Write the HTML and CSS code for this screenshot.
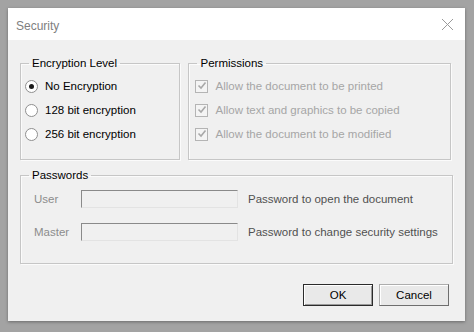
FILE: index.html
```html
<!DOCTYPE html>
<html>
<head>
<meta charset="utf-8">
<link rel="stylesheet" href="styles.css">
</head>
<body>
<div class="window">
  <div class="titlebar">
    <span class="title">Security</span>
    <svg class="close" width="13" height="13" viewBox="0 0 13 13"><path d="M1 1 L12 12 M12 1 L1 12" stroke="#9a9a9a" stroke-width="1" fill="none"/></svg>
  </div>
  <div class="content">
    <div class="top-row">
      <fieldset class="group enc">
        <legend>Encryption Level</legend>
        <div class="opt-list">
          <label class="opt"><span class="radio checked"></span>No Encryption</label>
          <label class="opt"><span class="radio"></span>128 bit encryption</label>
          <label class="opt"><span class="radio"></span>256 bit encryption</label>
        </div>
      </fieldset>
      <fieldset class="group perm">
        <legend>Permissions</legend>
        <div class="opt-list perm-list">
          <label class="opt disabled"><span class="check"><svg width="10" height="10" viewBox="0 0 10 10"><path d="M1.5 4.5 L4 7 L8.5 1.5" stroke="#a8a8a8" stroke-width="1.6" fill="none"/></svg></span>Allow the document to be printed</label>
          <label class="opt disabled"><span class="check"><svg width="10" height="10" viewBox="0 0 10 10"><path d="M1.5 4.5 L4 7 L8.5 1.5" stroke="#a8a8a8" stroke-width="1.6" fill="none"/></svg></span>Allow text and graphics to be copied</label>
          <label class="opt disabled"><span class="check"><svg width="10" height="10" viewBox="0 0 10 10"><path d="M1.5 4.5 L4 7 L8.5 1.5" stroke="#a8a8a8" stroke-width="1.6" fill="none"/></svg></span>Allow the document to be modified</label>
        </div>
      </fieldset>
    </div>
    <fieldset class="group pw">
      <legend>Passwords</legend>
      <div class="pw-grid">
        <span class="pw-label">User</span>
        <span class="pw-input"></span>
        <span class="pw-desc">Password to open the document</span>
        <span class="pw-label">Master</span>
        <span class="pw-input"></span>
        <span class="pw-desc">Password to change security settings</span>
      </div>
    </fieldset>
    <div class="buttons">
      <button class="btn default">OK</button>
      <button class="btn">Cancel</button>
    </div>
  </div>
</div>
</body>
</html>
```

FILE: styles.css
```css
html, body {
  margin: 0;
  padding: 0;
}
body {
  background: #a3a3a3;
  width: 474px;
  height: 332px;
  overflow: hidden;
  font-family: "Liberation Sans", Arial, sans-serif;
  font-size: 11.5px;
  color: #000;
}
.window {
  margin: 8px 0 0 8px;
  width: 457px;
  height: 313px;
  background: #f0f0f0;
  box-shadow: 0 1px 3px rgba(0,0,0,0.35);
  display: flex;
  flex-direction: column;
}
.titlebar {
  height: 32px;
  box-sizing: border-box;
  background: #fff;
  display: flex;
  align-items: center;
  justify-content: space-between;
  padding: 3px 11px 0 8px;
}
.title {
  color: #808080;
  font-size: 12px;
}
.close {
  display: block;
  margin-top: -2px;
}
.content {
  padding: 16px 14px 0 12px;
  display: flex;
  flex-direction: column;
}
.top-row {
  display: flex;
  gap: 8px;
  height: 104px;
}
.group {
  margin: 0;
  padding: 0;
  min-width: 0;
  border: 1px solid #c6c6c6;
  box-shadow: inset 1px 1px 0 #fbfbfb, 1px 1px 0 #fbfbfb;
}
.group legend {
  margin-left: 8px;
  padding: 0 3px;
  line-height: 14px;
  height: 14px;
  font-size: 11.5px;
}
.enc {
  width: 160px;
}
.perm {
  width: 263px;
}
.opt-list {
  display: flex;
  flex-direction: column;
  padding: 4px 0 0 4px;
}
.perm-list {
  padding-left: 6px;
}
.opt {
  height: 24px;
  display: flex;
  align-items: center;
  gap: 7px;
  white-space: nowrap;
}
.opt.disabled {
  color: #a6a6a6;
}
.radio {
  width: 11px;
  height: 11px;
  border-radius: 50%;
  border: 1px solid #8f8f8f;
  background: #fff;
  display: flex;
  align-items: center;
  justify-content: center;
}
.radio.checked::after {
  content: "";
  width: 5px;
  height: 5px;
  border-radius: 50%;
  background: #1a1a1a;
}
.check {
  width: 11px;
  height: 11px;
  border: 1px solid #b4b4b4;
  background: #f4f4f4;
  display: flex;
  align-items: center;
  justify-content: center;
}
.check svg {
  display: block;
}
.pw {
  width: 431px;
  height: 94px;
  margin-top: 8px;
}
.pw-grid {
  display: grid;
  grid-template-columns: 37px 157px auto;
  column-gap: 10px;
  row-gap: 15px;
  padding: 8px 0 0 13px;
  align-items: center;
}
.pw-label {
  color: #8c8c8c;
}
.pw-input {
  height: 16px;
  border: 1px solid #e3e3e3;
  border-top-color: #8a8a8a;
  border-left-color: #8a8a8a;
  background: #f0f0f0;
}
.pw-desc {
  color: #505050;
  white-space: nowrap;
}
.buttons {
  display: flex;
  justify-content: flex-end;
  gap: 6px;
  margin-top: 20px;
  padding-right: 2px;
}
.btn {
  width: 70px;
  height: 22px;
  margin: 0;
  padding: 0;
  font-family: "Liberation Sans", Arial, sans-serif;
  font-size: 11.5px;
  color: #000;
  background: #e9e9e9;
  border: 1px solid #adadad;
  border-right-color: #6e6e6e;
  border-bottom-color: #6e6e6e;
  box-shadow: inset 1px 1px 0 #fff;
}
.btn.default {
  border: 1px solid #2b2b2b;
  box-shadow: inset 1px 1px 0 #fff, inset -1px -1px 0 #9a9a9a;
}
```
